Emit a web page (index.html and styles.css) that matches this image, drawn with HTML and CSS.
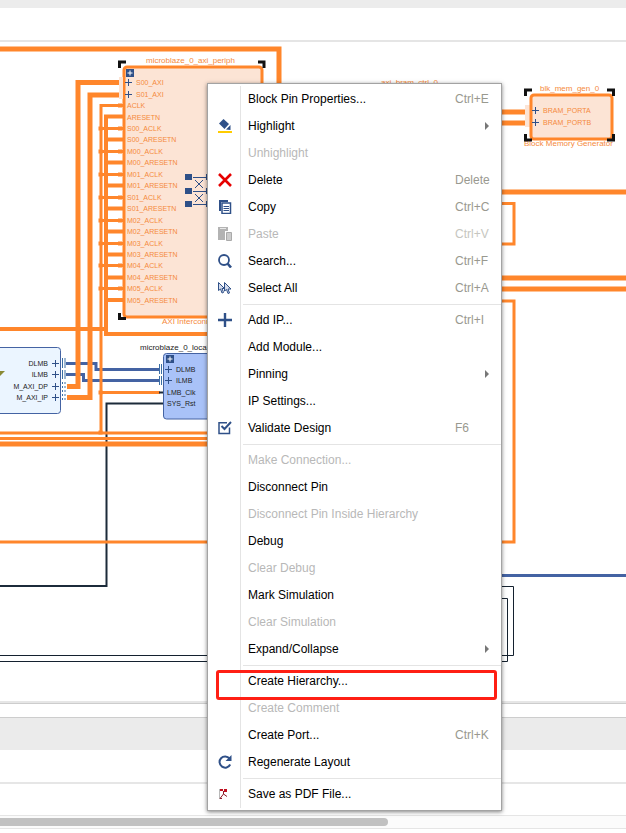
FILE: index.html
```html
<!DOCTYPE html>
<html lang="en">
<head>
    <meta charset="UTF-8">
    <meta name="viewport" content="width=device-width, initial-scale=1.0">
    <title>Block Design</title>
    <link rel="stylesheet" href="styles.css">
</head>
<body>
<div class="toolbar"></div>
<div class="tabs"></div>
<main class="canvas">
    <svg class="diagram" width="100%" height="659" role="img" aria-label="Block diagram">
        <g transform="translate(0 -42)">
            <!-- reset and status nets -->
            <path class="net" d="M163 403.500H106.500V586H0"/>
            <path class="thin" d="M0 655.500H513.500V586.500H400M0 661.500H507.500V598.500H400"/>
            <path class="blue" d="M400 575.500H3000"/>
            <path class="blue" d="M66 363.500H96V369.500H159M66 374.500H83.500V380.500H159"/>
            <!-- buses -->
            <path class="bus" d="M0 49H279V100M119 82.500H78V386.500H67M119 95H90V397.500H67"/>
            <path class="bus" d="M0 444H400M400 192H3000M400 278H3000M400 289H3000M400 112H525M400 123H525"/>
            <path class="wire" d="M123 105.500H101V432.500M101 392.500H160M0 433H400M0 438.500H400M0 542H514V301H400M400 203.500H514V244H400"/>
            <path class="wire4" d="M123 116.500H106V334H400M0 329H108"/>
            <path class="wire" d="M101 128.500H123M101 151.500H123M101 174.500H123M101 197.500H123M101 220.500H123M101 243.500H123M101 265.500H123M101 288.500H123"/>
            <path class="wire4" d="M106 139.500H123M106 162.500H123M106 185.500H123M106 208.500H123M106 231.500H123M106 254.500H123M106 277.500H123M106 300H123"/>
            <path class="dots" d="M100.500 128.500h0M100.500 151.500h0M100.500 174.500h0M100.500 197.500h0M100.500 220.500h0M100.500 243.500h0M100.500 265.500h0M100.500 288.500h0M100.500 392.500h0M100.500 432.500h0"/>
            <path class="dots" d="M120 105.500h0M120 128.500h0M120 151.500h0M120 174.500h0M120 197.500h0M120 220.500h0M120 243.500h0M120 265.500h0M120 288.500h0"/>

            <!-- microblaze_0_axi_periph -->
            <rect class="block" x="124" y="67" width="138" height="250" rx="3"/>
            <path class="pad" d="M119 77h4v22h-4z"/>
            <path class="corner" d="M119.500 68V62H126M258 62H264V68M119.500 313V318.500H126"/>
            <rect class="expand" x="126" y="69" width="8" height="8"/>
            <path class="expand-plus" d="M127.500 73h5M130 70.500v5"/>
            <path class="plus" d="M125 82.500h7M128.500 79v7M125 94.500h7M128.500 91v7"/>
            <path class="plus" d="M193 177.500h14M193 191.500h14M193 204.500h14M195 180l8 8M203 180l-8 8M195 194l8 8M203 194l-8 8"/>
            <path class="expand" d="M185 174h7v6h-7zM185 188h7v6h-7zM185 201h7v6h-7zM206 174h2v6h-2zM206 188h2v6h-2zM206 201h2v6h-2z"/>
            <text class="name" x="146" y="63">microblaze_0_axi_periph</text>
            <text class="name" x="162" y="324">AXI Interconnect</text>
            <g class="pins">
                <text x="136" y="85">S00_AXI</text>
                <text x="136" y="97">S01_AXI</text>
                <text x="127" y="108">ACLK</text>
                <text x="127" y="120">ARESETN</text>
                <text x="127" y="131">S00_ACLK</text>
                <text x="127" y="142">S00_ARESETN</text>
                <text x="127" y="154">M00_ACLK</text>
                <text x="127" y="165">M00_ARESETN</text>
                <text x="127" y="177">M01_ACLK</text>
                <text x="127" y="188">M01_ARESETN</text>
                <text x="127" y="200">S01_ACLK</text>
                <text x="127" y="211">S01_ARESETN</text>
                <text x="127" y="223">M02_ACLK</text>
                <text x="127" y="234">M02_ARESETN</text>
                <text x="127" y="246">M03_ACLK</text>
                <text x="127" y="257">M03_ARESETN</text>
                <text x="127" y="268">M04_ACLK</text>
                <text x="127" y="280">M04_ARESETN</text>
                <text x="127" y="291">M05_ACLK</text>
                <text x="127" y="303">M05_ARESETN</text>
            </g>

            <text class="name" x="381" y="85">axi_bram_ctrl_0</text>

            <!-- blk_mem_gen_0 -->
            <path class="pad" d="M525 105h5v22h-5z"/>
            <text class="name" x="540" y="91">blk_mem_gen_0</text>
            <text class="name" x="524" y="146">Block Memory Generator</text>
            <rect class="block" x="531" y="95" width="81" height="44" rx="3"/>
            <path class="corner" d="M525.500 96V90H532M607 90H613.500V96M525.500 134V140H532M607 140H613.500V134"/>
            <path class="plus" d="M532 110.500h7M535.500 107v7M532 122.500h7M535.500 119v7"/>
            <g class="pins">
                <text x="543" y="113">BRAM_PORTA</text>
                <text x="543" y="125">BRAM_PORTB</text>
            </g>

            <!-- microblaze_0 -->
            <rect class="cpu" x="-10" y="347.500" width="70.500" height="66" rx="3"/>
            <path class="logo" d="M0 371h5l-5 5z"/>
            <g class="pins dark" text-anchor="end">
                <text x="48" y="366">DLMB</text>
                <text x="48" y="377">ILMB</text>
                <text x="48" y="389">M_AXI_DP</text>
                <text x="48" y="400">M_AXI_IP</text>
            </g>
            <path class="plus" d="M52 363.500h7M55.500 360v7M52 374.500h7M55.500 371v7M52 386.500h7M55.500 383v7M52 397.500h7M55.500 394v7"/>
            <path class="port" d="M62.500 358v10M65 358v10M62.500 370v9M65 370v9"/>
            <path class="port dashed" d="M62.500 382v20M65 382v20"/>

            <!-- microblaze_0_local_memory -->
            <rect class="memory" x="163.500" y="353.500" width="100" height="65.500" rx="3"/>
            <rect class="expand" x="166" y="355" width="8" height="8"/>
            <path class="expand-plus" d="M167.500 359h5M170 356.500v5"/>
            <text class="name dark" x="140" y="350">microblaze_0_local_memory</text>
            <g class="pins dark">
                <text x="176" y="372">DLMB</text>
                <text x="176" y="383">ILMB</text>
                <text x="167" y="395">LMB_Clk</text>
                <text x="167" y="406">SYS_Rst</text>
            </g>
            <path class="plus" d="M165 369.500h7M168.500 366v7M165 380.500h7M168.500 377v7"/>
            <path class="port" d="M159.500 364v10M161.500 364v10M159.500 376v9M161.500 376v9"/>
            <path class="net" d="M159 392.500h4"/>
        </g>
    </svg>
</main>
<div class="splitter"></div>
<div class="panel-title"></div>
<div class="panel-tools"></div>
<div class="panel-body"></div>
<div class="scroll"><div class="thumb"></div></div>

<div class="menu" role="menu">
    <button class="item" role="menuitem"><span class="label">Block Pin Properties...</span><kbd>Ctrl+E</kbd></button>
    <button class="item" role="menuitem">
        <svg class="icon" viewBox="0 0 14 14"><path d="M1 4.500L5.500 0L11 5L6.500 10z" fill="#2f5088"/><path d="M8 10.500L12.500 6v5z" fill="#2f5088"/><path d="M0 12h14v2H0z" fill="#ffcc00"/></svg>
        <span class="label">Highlight</span><i class="arrow"></i>
    </button>
    <button class="item" role="menuitem" disabled><span class="label">Unhighlight</span></button>
    <button class="item" role="menuitem">
        <svg class="icon" viewBox="0 0 14 14"><path d="M1 1L13 13M13 1L1 13" stroke="#e60000" stroke-width="2.600"/></svg>
        <span class="label">Delete</span><kbd>Delete</kbd>
    </button>
    <button class="item" role="menuitem">
        <svg class="icon" viewBox="0 0 14 14"><path d="M1 0h9v2H3v9H1z" fill="#2f5088"/><path d="M4 3h8.500v10.500H4z" fill="#fff" stroke="#2f5088" stroke-width="1.500"/><path d="M5.500 6.500h5.500M5.500 8.500h5.500M5.500 10.500h5.500" stroke="#2f5088"/></svg>
        <span class="label">Copy</span><kbd>Ctrl+C</kbd>
    </button>
    <button class="item" role="menuitem" disabled>
        <svg class="icon" viewBox="0 0 14 14"><path d="M0 0h10v13H0z" fill="#b3b3b3"/><path d="M2 1.500h6" stroke="#e8e8e8"/><path d="M7 4h7v10H7z" fill="#fff"/><path d="M8.500 5.500h5v8h-5z" fill="#ccc" stroke="#aaa"/></svg>
        <span class="label">Paste</span><kbd>Ctrl+V</kbd>
    </button>
    <button class="item" role="menuitem">
        <svg class="icon" viewBox="0 0 14 14"><circle cx="6" cy="6" r="5" fill="none" stroke="#2f5088" stroke-width="1.800"/><path d="M9.500 9.500L13 13.500" stroke="#2f5088" stroke-width="2.600"/></svg>
        <span class="label">Search...</span><kbd>Ctrl+F</kbd>
    </button>
    <button class="item" role="menuitem">
        <svg class="icon" viewBox="0 0 14 14" fill="#d5dcec" stroke="#2f5088"><path d="M.5 1.500v8l2-1.500 1.500 4 1.500-.5-1.500-4h2.500z"/><path d="M6.500 1.500v8.500l2-1.500 1.500 4 1.500-.5-1.500-4h3z"/></svg>
        <span class="label">Select All</span><kbd>Ctrl+A</kbd>
    </button>
    <hr>
    <button class="item" role="menuitem">
        <svg class="icon" viewBox="0 0 14 14"><path d="M0 7h14M7 0v14" stroke="#2f5088" stroke-width="2.400"/></svg>
        <span class="label">Add IP...</span><kbd>Ctrl+I</kbd>
    </button>
    <button class="item" role="menuitem"><span class="label">Add Module...</span></button>
    <button class="item" role="menuitem"><span class="label">Pinning</span><i class="arrow"></i></button>
    <button class="item" role="menuitem"><span class="label">IP Settings...</span></button>
    <button class="item" role="menuitem">
        <svg class="icon" viewBox="0 0 14 14" fill="none" stroke="#2f5088"><path d="M9 1.800H1V12.500H11.500V6.500" stroke-width="1.500"/><path d="M3.500 5L6.500 8L13 1" stroke-width="2"/></svg>
        <span class="label">Validate Design</span><kbd>F6</kbd>
    </button>
    <hr>
    <button class="item" role="menuitem" disabled><span class="label">Make Connection...</span></button>
    <button class="item" role="menuitem"><span class="label">Disconnect Pin</span></button>
    <button class="item" role="menuitem" disabled><span class="label">Disconnect Pin Inside Hierarchy</span></button>
    <button class="item" role="menuitem"><span class="label">Debug</span></button>
    <button class="item" role="menuitem" disabled><span class="label">Clear Debug</span></button>
    <button class="item" role="menuitem"><span class="label">Mark Simulation</span></button>
    <button class="item" role="menuitem" disabled><span class="label">Clear Simulation</span></button>
    <button class="item" role="menuitem"><span class="label">Expand/Collapse</span><i class="arrow"></i></button>
    <hr>
    <button class="item marked" role="menuitem"><span class="label">Create Hierarchy...</span></button>
    <button class="item" role="menuitem" disabled><span class="label">Create Comment</span></button>
    <button class="item" role="menuitem"><span class="label">Create Port...</span><kbd>Ctrl+K</kbd></button>
    <button class="item" role="menuitem">
        <svg class="icon" viewBox="0 0 14 14"><path d="M11.500 3.500A5.600 5.600 0 1 0 12.200 9.500" fill="none" stroke="#2f5088" stroke-width="2"/><path d="M13.500 0v6H7.500z" fill="#2f5088"/></svg>
        <span class="label">Regenerate Layout</span>
    </button>
    <hr>
    <button class="item" role="menuitem">
        <svg class="icon" viewBox="0 0 14 14"><path d="M1.500 2v10" stroke="#b9b9b9"/><path d="M2 2h3v2H2zM6 2h3v3H6z" fill="#c01020"/><path d="M5.500 4v3L2 11.500M5.500 7L9 9.500M2 11.500h2" fill="none" stroke="#8c1a28"/></svg>
        <span class="label">Save as PDF File...</span>
    </button>
</div>
</body>
</html>
```
FILE: styles.css
```css
*{
    margin: 0;
    padding: 0;
    box-sizing: border-box;
}
body{
    min-height: 100vh;
    background: #fff;
    font-family: "Liberation Sans", Arial, sans-serif;
    font-size: 12px;
    overflow-x: hidden;
}
.toolbar{
    height: 8px;
    background: #ececec;
}
.tabs{
    height: 34px;
    border-bottom: 2px solid #e5e5e5;
}
.canvas{
    overflow: hidden;
}
.diagram{
    display: block;
}
.splitter{
    height: 17px;
    border-top: 2px solid #e6e6e6;
    border-bottom: 1px solid #cdcdcd;
    box-shadow: inset 0 1px #cdcdcd;
}
.panel-title{
    height: 32px;
    background: #ebebeb;
}
.panel-tools{
    height: 34px;
    border-bottom: 2px solid #e6e6e6;
}
.panel-body{
    height: 31px;
}
.scroll{
    height: 14px;
    padding-top: 2px;
    border-top: 1px solid #e5e5e5;
    border-bottom: 1px solid #e5e5e5;
    background: #fbfbfb;
}
.thumb{
    width: 62%;
    height: 8px;
    background: #c1c1c1;
    border-radius: 0 4px 4px 0;
}

/* diagram */
.diagram path{
    fill: none;
}
.diagram .bus{
    stroke: #ff862b;
    stroke-width: 5;
}
.diagram .wire{
    stroke: #ff862b;
    stroke-width: 3;
}
.diagram .wire4{
    stroke: #ff862b;
    stroke-width: 4;
}
.diagram .dots{
    stroke: #ff862b;
    stroke-width: 4;
    stroke-linecap: square;
}
.diagram .blue{
    stroke: #4463a3;
    stroke-width: 3;
}
.diagram .net{
    stroke: #1c2b3a;
    stroke-width: 2;
}
.diagram .thin{
    stroke: #14212f;
}
.diagram .block{
    fill: #fce4d5;
    stroke: #ff862b;
    stroke-width: 3;
}
.diagram .pad{
    fill: #fce4d5;
}
.diagram .corner{
    stroke: #111;
    stroke-width: 3;
}
.diagram .expand{
    fill: #2f5088;
}
.diagram .expand-plus{
    stroke: #fff;
}
.diagram .plus{
    stroke: #2f5088;
}
.diagram .port{
    stroke: #3b6ea5;
}
.diagram .dashed{
    stroke-dasharray: 2 2;
}
.diagram .logo{
    fill: #8a8a35;
}
.cpu{
    fill: #ebf5ff;
    stroke: #4463a3;
}
.memory{
    fill: #a9c2f8;
    stroke: #4463a3;
}
.name{
    font-size: 8px;
    fill: #f58a3c;
}
.pins{
    font-size: 7px;
    fill: #f58a3c;
}
.dark{
    fill: #222;
}

/* context menu */
.menu{
    position: absolute;
    left: 207px;
    top: 83px;
    width: 295px;
    padding: 1px 0 3px;
    border: 1px solid #a3a3a3;
    background: linear-gradient(#e4e4e4, #e4e4e4) 32px 2px / 1px calc(100% - 4px) no-repeat #fff;
    box-shadow: 0 1px 4px rgba(0, 0, 0, .5);
}
.item{
    position: relative;
    display: grid;
    grid-template-columns: 40px 1fr 46px;
    align-items: center;
    width: 100%;
    height: 27px;
    border: 0;
    background: none;
    color: #000;
    font: inherit;
    text-align: left;
}
.item:disabled{
    color: #b8b8b8;
}
.icon{
    grid-column: 1;
    grid-row: 1;
    width: 14px;
    height: 14px;
    margin-left: 10px;
}
.label{
    grid-column: 2;
    grid-row: 1;
    white-space: nowrap;
}
.item kbd{
    grid-column: 3;
    grid-row: 1;
    font: inherit;
    color: #99998f;
}
.item:disabled kbd{
    color: #c6c6c0;
}
.arrow{
    grid-column: 3;
    grid-row: 1;
    margin-left: 30px;
    border: 4px solid transparent;
    border-left-color: #777;
    border-right: 0;
    width: 4px;
}
.menu hr{
    height: 1px;
    margin: 3px 0 1px 35px;
    border: 0;
    background: #e4e4e4;
}
.marked::after{
    content: "";
    position: absolute;
    left: 8px;
    right: 4px;
    top: 3px;
    bottom: -6px;
    border: 3px solid #ff1f14;
    border-radius: 3px;
    z-index: 1;
}
```
